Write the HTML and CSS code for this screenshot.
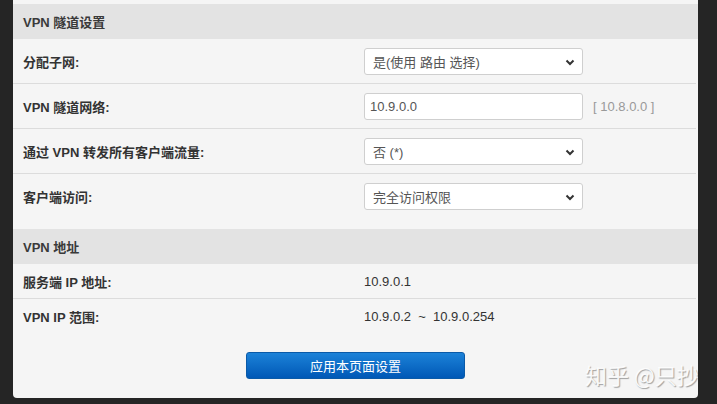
FILE: index.html
```html
<!DOCTYPE html>
<html lang="zh-CN">
<head>
<meta charset="utf-8">
<title>VPN 隧道设置</title>
<link rel="stylesheet" href="styles.css">
</head>
<body>
<div class="panel">
  <div class="section-head">VPN 隧道设置</div>
  <div class="row">
    <div class="label">分配子网:</div>
    <div class="value">
      <div class="select">是(使用 路由 选择)<svg class="chev" width="10" height="7" viewBox="0 0 10 7"><path d="M1.5 1.5 L5 5 L8.5 1.5" fill="none" stroke="#333" stroke-width="2"/></svg></div>
    </div>
  </div>
  <div class="row">
    <div class="label">VPN 隧道网络:</div>
    <div class="value">
      <div class="input">10.9.0.0</div>
      <span class="hint">[ 10.8.0.0 ]</span>
    </div>
  </div>
  <div class="row">
    <div class="label">通过 VPN 转发所有客户端流量:</div>
    <div class="value">
      <div class="select">否 (*)<svg class="chev" width="10" height="7" viewBox="0 0 10 7"><path d="M1.5 1.5 L5 5 L8.5 1.5" fill="none" stroke="#333" stroke-width="2"/></svg></div>
    </div>
  </div>
  <div class="row row-tall">
    <div class="label">客户端访问:</div>
    <div class="value">
      <div class="select">完全访问权限<svg class="chev" width="10" height="7" viewBox="0 0 10 7"><path d="M1.5 1.5 L5 5 L8.5 1.5" fill="none" stroke="#333" stroke-width="2"/></svg></div>
    </div>
  </div>
  <div class="section-head">VPN 地址</div>
  <div class="row row-short">
    <div class="label">服务端 IP 地址:</div>
    <div class="value text">10.9.0.1</div>
  </div>
  <div class="row row-short last">
    <div class="label">VPN IP 范围:</div>
    <div class="value text">10.9.0.2 &nbsp;~&nbsp; 10.9.0.254</div>
  </div>
  <div class="actions">
    <div class="btn">应用本页面设置</div>
  </div>
  <div class="watermark">知乎 @只抄</div>
</div>
</body>
</html>
```
FILE: styles.css
```css
html, body {
  margin: 0;
  padding: 0;
  background: #252525;
  width: 717px;
  height: 404px;
  overflow: hidden;
}
body {
  font-family: "Liberation Sans", "Noto Sans CJK SC", sans-serif;
  font-size: 13px;
  color: #333;
}
.panel {
  position: relative;
  margin-left: 13px;
  width: 685px;
  height: 394px;
  padding-top: 4px;
  background: #f5f5f5;
  border-radius: 0 0 4px 4px;
  overflow: hidden;
}
.section-head {
  height: 35px;
  background: #e3e3e3;
  display: flex;
  align-items: center;
  padding-left: 10px;
  font-weight: bold;
  color: #3a3a3a;
  font-size: 13px;
}
.row {
  display: flex;
  align-items: center;
  height: 44px;
  border-bottom: 1px solid #dcdcdc;
  margin-right: 2px;
}
.row-tall {
  height: 55px;
  align-items: flex-start;
  border-bottom: none;
}
.row-tall .label, .row-tall .value {
  margin-top: 8px;
  height: 28px;
  display: flex;
  align-items: center;
}
.row-short {
  height: 34px;
}
.last {
  border-bottom: none;
  height: 35px;
}
.label {
  width: 341px;
  padding-left: 10px;
  font-weight: bold;
  color: #333;
}
.value {
  display: flex;
  align-items: center;
}
.text {
  color: #333;
}
.select, .input {
  position: relative;
  box-sizing: border-box;
  width: 219px;
  height: 27px;
  background: #fff;
  border: 1px solid #cfcfcf;
  border-radius: 3px;
  padding-left: 8px;
  display: flex;
  align-items: center;
  color: #555;
}
.input {
  padding-left: 5px;
}
.chev {
  position: absolute;
  right: 7px;
  top: 10px;
}
.hint {
  margin-left: 10px;
  color: #999;
}
.actions {
  padding-top: 18px;
  padding-left: 233px;
}
.btn {
  width: 219px;
  height: 27px;
  box-sizing: border-box;
  border-radius: 3px;
  background: linear-gradient(#1c82d8, #0058b6);
  border: 1px solid #0a5aa8;
  color: #fff;
  display: flex;
  align-items: center;
  justify-content: center;
  font-size: 13px;
}
.watermark {
  position: absolute;
  left: 572px;
  top: 358px;
  font-size: 22px;
  white-space: nowrap;
  color: rgba(255,255,255,0.9);
  text-shadow: 1px 1px 1px rgba(0,0,0,0.35);
  font-family: "Noto Sans CJK SC", sans-serif;
}
```
